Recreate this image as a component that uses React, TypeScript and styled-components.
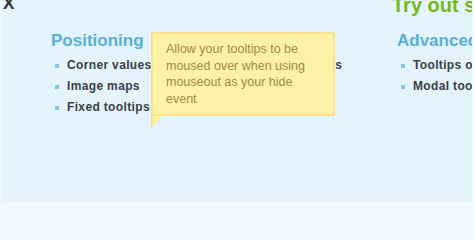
import React from 'react';
import styled, { createGlobalStyle } from 'styled-components';

const GlobalStyle = createGlobalStyle`
  html, body {
    margin: 0;
    padding: 0;
    background: #eef8fe;
    overflow: hidden;
  }
`;

interface Column {
  title: string;
  items: string[];
}

const columns: Column[] = [
  { title: 'Positioning', items: ['Corner values', 'Image maps', 'Fixed tooltips'] },
  { title: 'Content', items: ['Dynamic tooltips', 'API methods', 'Callbacks'] },
  { title: 'Advanced', items: ['Tooltips on tooltips', 'Modal tooltips'] },
];

const App: React.FC = () => {
  return (
    <>
      <GlobalStyle />
      <Panel>
        <TopBar>
          <CloseMark>X</CloseMark>
          <DemoTitle>Try out some demos</DemoTitle>
        </TopBar>
        <Columns>
          {columns.map((col) => (
            <Section key={col.title}>
              <Heading>{col.title}</Heading>
              <List>
                {col.items.map((item) => (
                  <Item key={item}>{item}</Item>
                ))}
              </List>
            </Section>
          ))}
        </Columns>
        <Tooltip>
          Allow your tooltips to be moused over when using mouseout as your hide event
          <Tail viewBox="0 0 12 12" aria-hidden>
            <path d="M0 0 L12 0 L1 11 L0 12 Z" fill="#fdf1a6" />
            <path d="M0.5 0 L0.5 12" stroke="#f5df84" strokeWidth="1.5" />
          </Tail>
        </Tooltip>
      </Panel>
    </>
  );
};

const Panel = styled.div`
  position: relative;
  width: 470px;
  height: 202px;
  margin: 0 2px;
  background: #e3f4fd;
  overflow: hidden;
  font-family: 'Liberation Sans', Arial, sans-serif;
`;

const TopBar = styled.div`
  display: flex;
  justify-content: space-between;
  height: 16px;
  margin-top: -4px;
  padding-left: 1px;
  white-space: nowrap;
`;

const CloseMark = styled.span`
  font-size: 17px;
  line-height: 16px;
  font-weight: bold;
  color: #2e3236;
`;

const DemoTitle = styled.span`
  font-size: 20px;
  line-height: 18px;
  font-weight: bold;
  color: #79b51c;
  width: 80px;
`;

const Columns = styled.div`
  display: grid;
  grid-template-columns: 173px 173px 1fr;
  padding: 19px 0 0 49px;
`;

const Section = styled.div`
  white-space: nowrap;
  min-width: 0;
`;

const Heading = styled.h3`
  margin: 0;
  font-size: 17px;
  line-height: 20px;
  font-weight: bold;
  color: #5aafd7;
`;

const List = styled.ul`
  list-style: none;
  margin: 4px 0 0;
  padding: 0 0 0 16px;
`;

const Item = styled.li`
  position: relative;
  font-size: 12px;
  line-height: 21px;
  font-weight: bold;
  letter-spacing: 0.35px;
  color: #3a3f45;

  &::before {
    content: '';
    position: absolute;
    left: -12px;
    top: 9px;
    width: 4px;
    height: 4px;
    background: #8cc3dc;
  }
`;

const Tooltip = styled.div`
  position: absolute;
  left: 149px;
  top: 32px;
  width: 184px;
  height: 84px;
  box-sizing: border-box;
  padding: 7px 10px 0 13px;
  background: #fdf1a6;
  border: 2px solid #f7e48c;
  font-size: 12.5px;
  line-height: 16.5px;
  color: #a08c45;
`;

const Tail = styled.svg`
  position: absolute;
  left: -2px;
  top: 82px;
  width: 12px;
  height: 12px;
`;

export default App;
